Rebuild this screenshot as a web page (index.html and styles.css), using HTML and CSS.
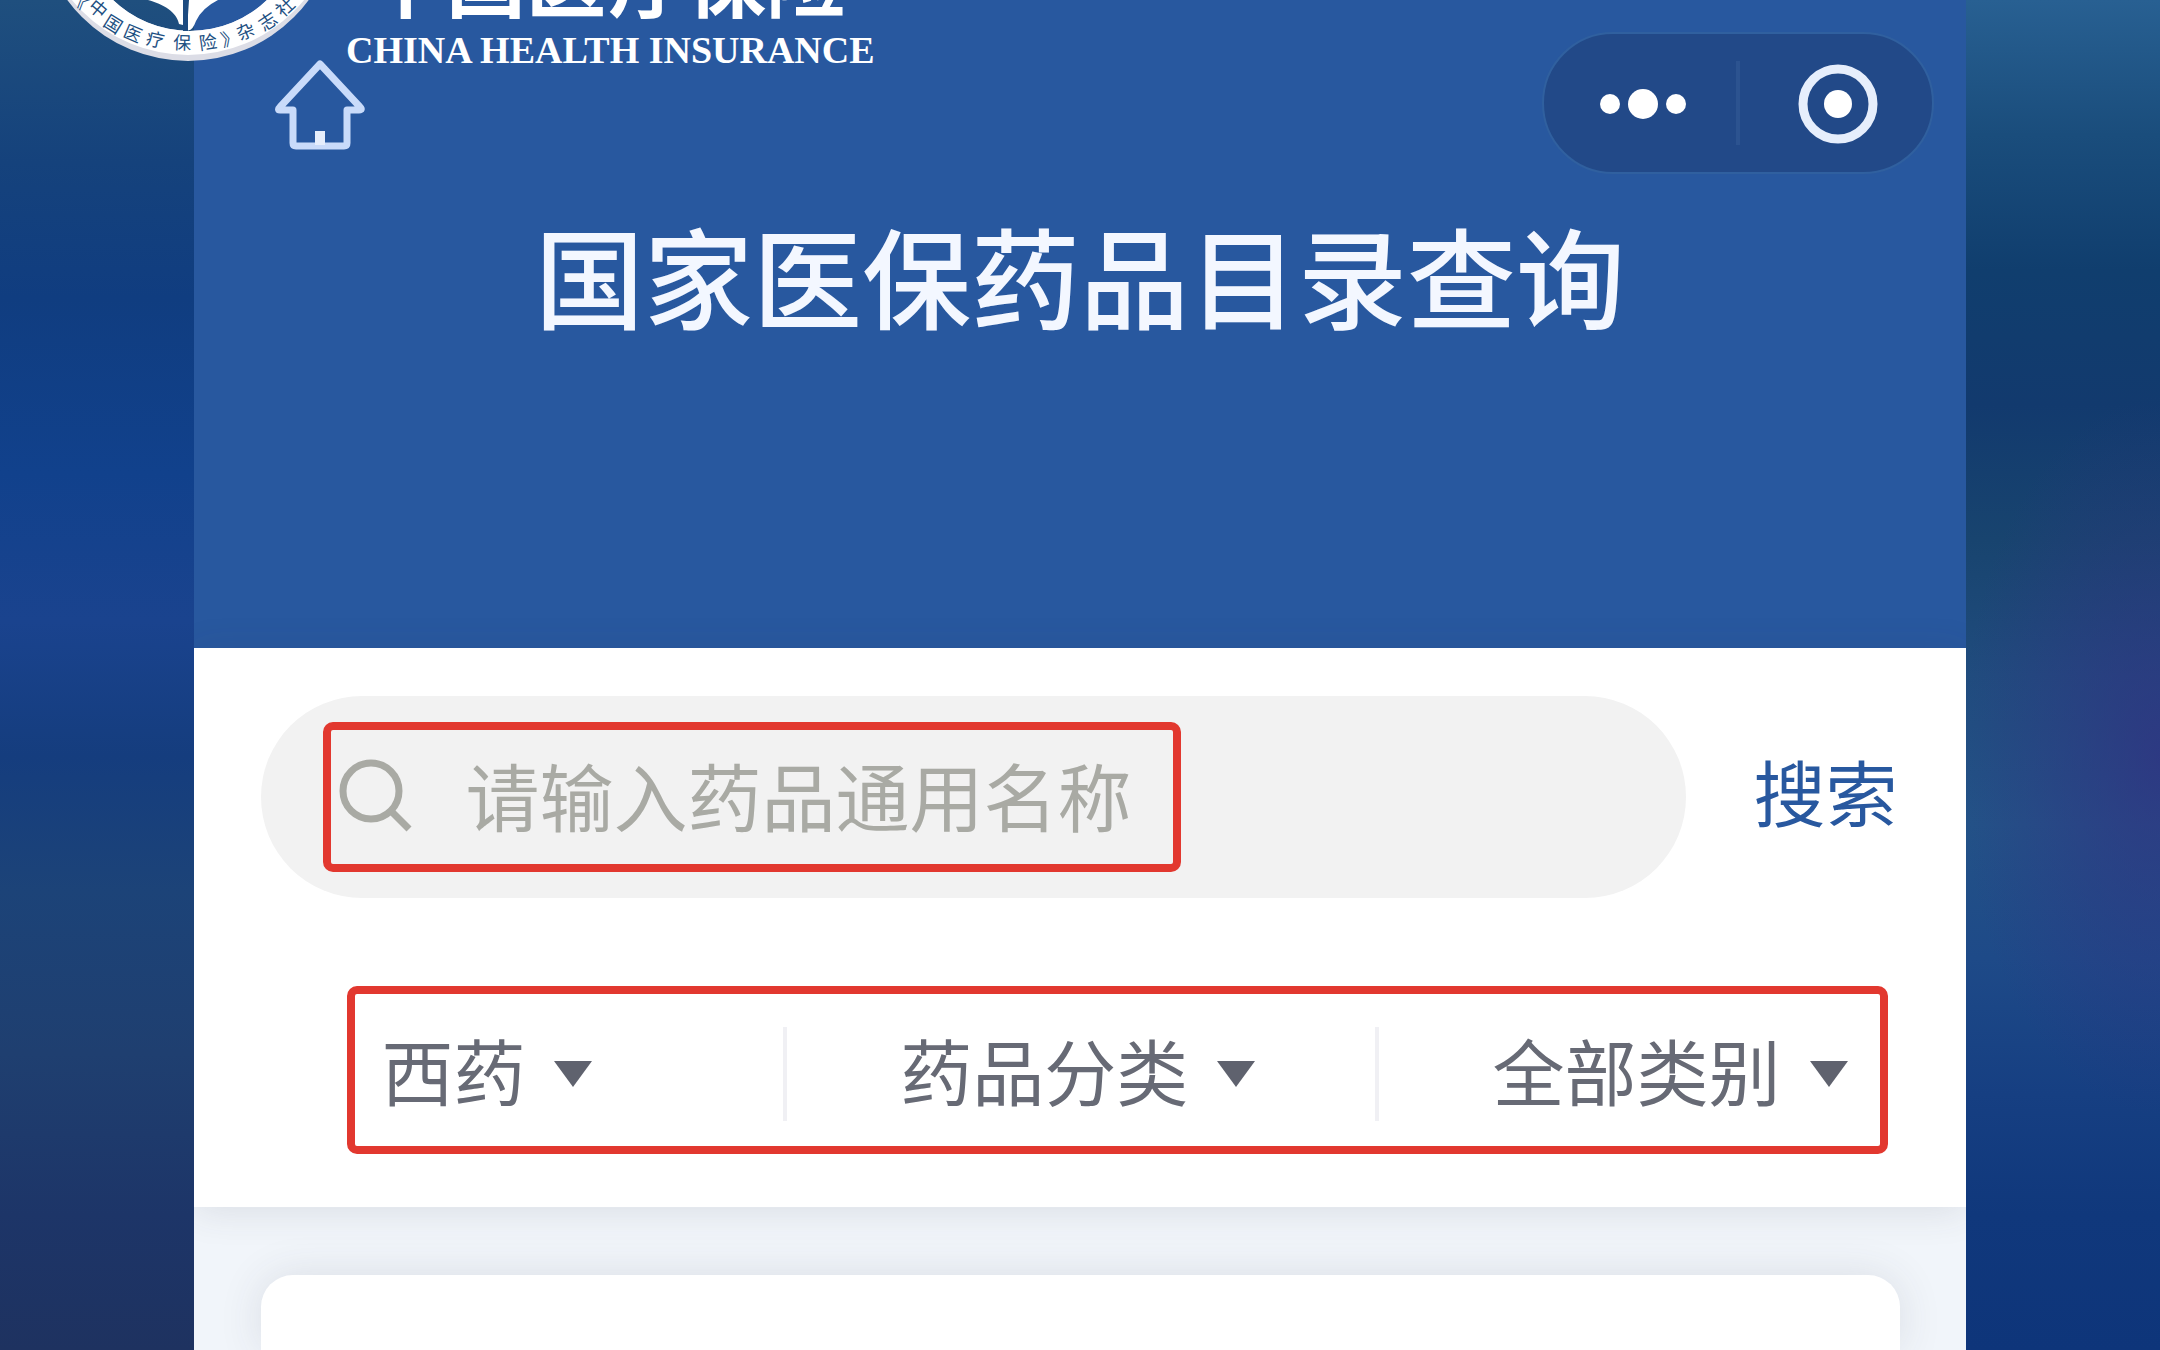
FILE: index.html
```html
<!DOCTYPE html>
<html lang="zh-CN">
<head>
  <meta charset="UTF-8" />
  <meta name="viewport" content="width=device-width, initial-scale=1.0"/>
  <title>国家医保药品目录查询</title>
  <link rel="stylesheet" href="styles.css">
</head>
<body>
  <!-- Magazine logo, lies over the page -->
  <div class="brand">
    <svg class="brand-seal" viewBox="0 0 260 64" role="img" aria-label="《中国医疗保险》杂志社">
      <path fill="#dcdde6" fill-rule="evenodd" d="M-22 -89 a150 150 0 1 0 300 0 a150 150 0 1 0 -300 0Z M19 -80 a111 111 0 1 0 222 0 a111 111 0 1 0 -222 0Z"/>
      <path fill="#fff" fill-rule="evenodd" d="M-22 -95 a150 150 0 1 0 300 0 a150 150 0 1 0 -300 0Z M19 -80 a111 111 0 1 0 222 0 a111 111 0 1 0 -222 0Z"/>
      <path d="M88 0 C103 4 117 12 119 24 L123 25 V0 Z M129 0 L127 30 Q132 32 136 21 Q142 8 158 0 Z" fill="#fff"/>
      <path d="M123 0 H128 V31 H123 Z" fill="#1d4b80"/>
      <text class="seal-text" x="9 27 42 62 85 113 140 163 180 204 223" y="-3 8 25 36 44 49 50 47 41 32 18" rotate="47 40 32 23 13 2 -8 -15 -24 -34 -43">《中国医疗保险》杂志社</text>
    </svg>
    <div class="brand-text">
      <div class="brand-cn">中国医疗保险</div>
      <div class="brand-en">CHINA HEALTH INSURANCE</div>
    </div>
  </div>

  <div class="app">
    <header>
      <div class="topbar">
        <a class="home" href="#" aria-label="首页">
          <svg viewBox="0 0 96 96">
            <path d="M48 9 L88 52 Q91 55 87 55 H75 V88 Q75 91 72 91 H24 Q21 91 21 88 V55 H8 Q5 55 8 52 Z" fill="none" stroke="#c9dbfa" stroke-width="7" stroke-linejoin="round"/>
            <path d="M48 76 V90" stroke="#e6eefc" stroke-width="10"/>
          </svg>
        </a>
        <div class="capsule">
          <button class="capsule-btn" aria-label="更多">
            <svg viewBox="0 0 100 100">
              <circle cx="20" cy="51" r="10"/>
              <circle cx="53" cy="51" r="15"/>
              <circle cx="86" cy="51" r="10"/>
            </svg>
          </button>
          <span class="capsule-line"></span>
          <button class="capsule-btn" aria-label="关闭">
            <svg viewBox="0 0 100 100">
              <circle cx="52" cy="51" r="35" fill="none" stroke="#e6eefc" stroke-width="9"/>
              <circle cx="52" cy="51" r="14"/>
            </svg>
          </button>
        </div>
      </div>
      <h1>国家医保药品目录查询</h1>
    </header>

    <div class="query">
      <form class="search">
        <div class="search-pill">
          <label class="search-box marked">
            <svg viewBox="0 0 80 80">
              <circle cx="34" cy="34" r="28"/>
              <path d="M54 54 L72 72"/>
            </svg>
            <input type="text" placeholder="请输入药品通用名称" aria-label="药品通用名称">
          </label>
        </div>
        <button class="search-btn" type="button">搜索</button>
      </form>

      <div class="filters marked">
        <div class="filter">
          <select aria-label="药品类型"><option>西药</option></select>
          <span class="arrow"></span>
        </div>
        <div class="filter">
          <select aria-label="药品分类"><option>药品分类</option></select>
          <span class="arrow"></span>
        </div>
        <div class="filter">
          <select aria-label="类别"><option>全部类别</option></select>
          <span class="arrow"></span>
        </div>
      </div>
    </div>

    <main>
      <div class="card"></div>
    </main>
  </div>
</body>
</html>
```
FILE: styles.css
```css
* { box-sizing: border-box; }

body {
  margin: 0;
  height: 100vh;
  overflow: hidden;
  display: flex;
  justify-content: center;
  position: relative;
  font-family: "Noto Sans CJK SC", sans-serif;
  background:
    radial-gradient(200px 360px at 100% 56%, rgba(50, 48, 130, 0.7), rgba(50, 48, 130, 0)),
    linear-gradient(180deg, #1f4f7e 0%, #15427c 12%, #103d80 22%, #11418c 35%, #1a438e 46%, #153d7e 56%, #1c4378 66%, #1f3f70 78%, #1d3568 90%, #1e3260 100%) left / 50% 100% no-repeat,
    linear-gradient(180deg, #286092 0%, #1a4d7c 10%, #103e6e 20%, #123a6e 30%, #18446f 40%, #204c7e 50%, #235287 61%, #1e4a88 71%, #163f82 81%, #10387c 90%, #0e357a 100%) right / 50% 100% no-repeat;
}

/* Logo */
.brand {
  position: absolute;
  top: 0;
  left: 60px;
  z-index: 2;
  display: flex;
  align-items: flex-end;
  gap: 26px;
  height: 68px;
  color: #fff;
}

.brand-seal {
  width: 260px;
  height: 64px;
  margin-bottom: 4px;
}

.seal-text {
  font-size: 18px;
  fill: #1d4f82;
}

.brand-cn {
  margin-bottom: 16px;
  padding-left: 20px;
  font-size: 80px;
  font-weight: bold;
  line-height: 80px;
}

.brand-en {
  font-family: "Liberation Serif", serif;
  font-size: 38px;
  font-weight: bold;
  line-height: 36px;
}

.app {
  width: 82%;
  display: flex;
  flex-direction: column;
  overflow: hidden;
  background: #f1f5fa;
}

header {
  height: 648px;
  background: #28589f;
  color: #f3f7ff;
}

.topbar {
  display: flex;
  justify-content: space-between;
  align-items: center;
  padding: 32px 32px 0 78px;
}

.home svg {
  display: block;
  width: 96px;
  height: 96px;
}

.capsule {
  display: flex;
  align-items: center;
  width: 392px;
  height: 142px;
  border: 2px solid #30609f;
  border-radius: 71px;
  background: #224988;
}

.capsule-btn {
  flex: 1;
  height: 100%;
  padding: 0;
  border: none;
  background: none;
}

.capsule-btn svg {
  width: 100px;
  height: 100px;
  fill: #fff;
  vertical-align: middle;
}

.capsule-line {
  width: 4px;
  height: 84px;
  background: #2c5390;
}

h1 {
  margin: 20px 0 0;
  font-size: 109px;
  line-height: 160px;
  font-weight: 500;
  text-align: center;
}

.query {
  height: 559px;
  padding: 48px 68px 0 67px;
  background: #fff;
  box-shadow: 0 4px 36px rgba(60, 60, 70, 0.12);
}

.search {
  display: flex;
  align-items: center;
  justify-content: space-between;
}

.search-pill {
  flex: 1;
  height: 202px;
  margin-right: 68px;
  padding: 26px 62px;
  border-radius: 101px;
  background: #f2f2f2;
}

/* Red highlight frame */
.marked {
  border: 8px solid #e2382f;
  border-radius: 10px;
}

.search-box {
  display: flex;
  align-items: center;
  width: 858px;
  height: 150px;
  padding-left: 6px;
}

.search-box svg {
  width: 80px;
  height: 80px;
  fill: none;
  stroke: #a9aaa4;
  stroke-width: 7;
}

.search-box input {
  flex: 1;
  min-width: 0;
  margin-left: 48px;
  padding: 0 0 8px;
  border: none;
  outline: none;
  background: none;
  font: inherit;
  font-size: 74px;
}

.search-box input::placeholder {
  color: #a9aaa4;
  opacity: 1;
}

.search-btn {
  padding: 0 0 16px;
  border: none;
  background: none;
  color: #28589f;
  font: inherit;
  font-size: 72px;
}

.filters {
  display: grid;
  grid-template-columns: 427fr 596fr 500fr;
  align-items: center;
  height: 168px;
  margin: 88px 10px 0 86px;
  padding-top: 8px;
}

.filter {
  display: flex;
  align-items: center;
  justify-content: flex-end;
  gap: 28px;
  height: 94px;
  padding-right: 32px;
}

.filter:first-child {
  justify-content: flex-start;
  padding: 0 0 0 26px;
}

.filter:nth-child(2) {
  padding-right: 120px;
  border-left: 4px solid #f0f0f4;
  border-right: 4px solid #f0f0f4;
}

.filter select {
  appearance: none;
  padding: 0 0 12px;
  border: none;
  background: none;
  color: #676a75;
  font: inherit;
  font-size: 72px;
}

.arrow {
  border: 19px solid transparent;
  border-top: 26px solid #5f626e;
  border-bottom: 0;
}

main {
  flex: 1;
  padding: 68px 66px 0 67px;
}

.card {
  height: 100%;
  border-radius: 32px 32px 0 0;
  background: #fff;
  box-shadow: 0 0 44px rgba(60, 60, 70, 0.12);
}
```
